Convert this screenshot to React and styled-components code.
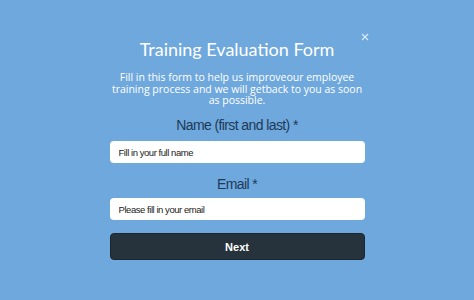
import styled, { createGlobalStyle } from "styled-components";

const Global = createGlobalStyle`
  html, body {
    margin: 0;
    padding: 0;
    background: #6fa8dc;
  }
`;

const Page = styled.main`
  position: relative;
  width: 474px;
  height: 300px;
  background: #6fa8dc;
  display: flex;
  flex-direction: column;
  align-items: center;
  padding-top: 37px;
  box-sizing: border-box;
  font-family: "Liberation Sans", Arial, sans-serif;
`;

const Close = styled.button`
  position: absolute;
  top: 31px;
  left: 359px;
  width: 12px;
  height: 12px;
  padding: 0;
  border: 0;
  background: transparent;
  cursor: pointer;
  display: flex;
  align-items: center;
  justify-content: center;
`;

const Title = styled.h1`
  margin: 0;
  color: #ffffff;
  font-family: "Lato", "Liberation Sans", sans-serif;
  font-size: 18px;
  font-weight: 400;
  line-height: 24px;
`;

const Intro = styled.p`
  margin: 11px 0 0;
  color: #ffffff;
  font-family: "Open Sans", sans-serif;
  font-size: 10.5px;
  line-height: 11.7px;
  text-align: center;
  white-space: nowrap;
`;

const Form = styled.form`
  width: 255px;
  margin-top: 9px;
  display: flex;
  flex-direction: column;
`;

const Field = styled.div`
  display: flex;
  flex-direction: column;
  align-items: center;
  margin-top: ${(p) => p.$gap || 0}px;
`;

const Label = styled.label`
  color: #1d3a58;
  font-size: 14px;
  letter-spacing: -0.6px;
  line-height: 18px;
  margin-bottom: ${(p) => p.$below}px;
`;

const Input = styled.input`
  width: 100%;
  height: 22px;
  box-sizing: border-box;
  border: 0;
  border-radius: 4px;
  background: #ffffff;
  padding: 0 9px;
  font-family: "Liberation Sans", Arial, sans-serif;
  font-size: 9.5px;
  letter-spacing: -0.45px;
  color: #222;
  outline: none;

  &::placeholder {
    color: #222;
  }
`;

const Next = styled.button`
  margin-top: 13px;
  height: 27px;
  width: 100%;
  border: 1px solid #1c262d;
  border-radius: 4px;
  background: #27333c;
  color: #ffffff;
  font-family: "Liberation Sans", Arial, sans-serif;
  font-size: 11px;
  font-weight: 700;
  cursor: pointer;
`;

export default function App() {
  return (
    <Page>
      <Global />
      <Close aria-label="Close">
        <svg width="8" height="8" viewBox="0 0 8 8">
          <path d="M1 1L7 7M7 1L1 7" stroke="#dce9f6" strokeWidth="1.1" />
        </svg>
      </Close>
      <Title>Training Evaluation Form</Title>
      <Intro>
        Fill in this form to help us improveour employee
        <br />
        training process and we will getback to you as soon
        <br />
        as possible.
      </Intro>
      <Form onSubmit={(e) => e.preventDefault()}>
        <Field>
          <Label htmlFor="name" $below={7}>Name (first and last) *</Label>
          <Input id="name" placeholder="Fill in your full name" />
        </Field>
        <Field $gap={12}>
          <Label htmlFor="email" $below={5}>Email *</Label>
          <Input id="email" placeholder="Please fill in your email" />
        </Field>
        <Next type="submit">Next</Next>
      </Form>
    </Page>
  );
}
